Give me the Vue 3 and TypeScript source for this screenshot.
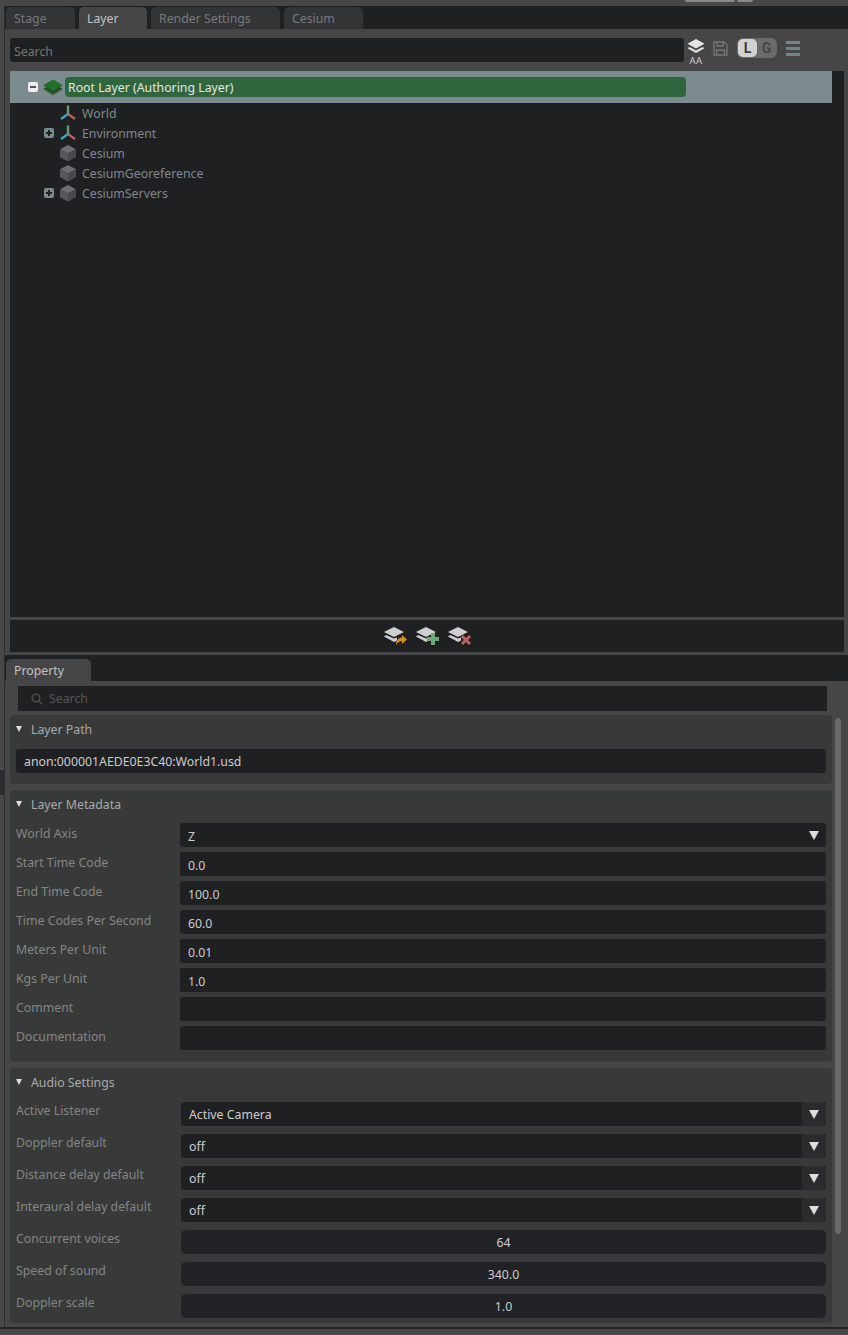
<script setup lang="ts">
interface TreeItem {
  name: string
  icon: 'axes' | 'cube'
  expandable: boolean
}

interface Field {
  label: string
  value: string
  kind: 'text' | 'select' | 'number'
}

const tabs = ['Stage', 'Layer', 'Render Settings', 'Cesium']

const treeItems: TreeItem[] = [
  { name: 'World', icon: 'axes', expandable: false },
  { name: 'Environment', icon: 'axes', expandable: true },
  { name: 'Cesium', icon: 'cube', expandable: false },
  { name: 'CesiumGeoreference', icon: 'cube', expandable: false },
  { name: 'CesiumServers', icon: 'cube', expandable: true },
]

const metadata: Field[] = [
  { label: 'World Axis', value: 'Z', kind: 'select' },
  { label: 'Start Time Code', value: '0.0', kind: 'text' },
  { label: 'End Time Code', value: '100.0', kind: 'text' },
  { label: 'Time Codes Per Second', value: '60.0', kind: 'text' },
  { label: 'Meters Per Unit', value: '0.01', kind: 'text' },
  { label: 'Kgs Per Unit', value: '1.0', kind: 'text' },
  { label: 'Comment', value: '', kind: 'text' },
  { label: 'Documentation', value: '', kind: 'text' },
]

const audio: Field[] = [
  { label: 'Active Listener', value: 'Active Camera', kind: 'select' },
  { label: 'Doppler default', value: 'off', kind: 'select' },
  { label: 'Distance delay default', value: 'off', kind: 'select' },
  { label: 'Interaural delay default', value: 'off', kind: 'select' },
  { label: 'Concurrent voices', value: '64', kind: 'number' },
  { label: 'Speed of sound', value: '340.0', kind: 'number' },
  { label: 'Doppler scale', value: '1.0', kind: 'number' },
]
</script>

<template>
  <div class="desk">
    <div class="top-strip">
      <span class="chip chip-wide"></span>
      <span class="chip chip-small"></span>
    </div>

    <div class="workspace">
      <div class="gutter"><span class="gutter-spot"></span></div>

      <div class="panels">
        <section class="layer-panel">
          <div class="tab-bar">
            <div v-for="tab in tabs" :key="tab" :class="['tab', `tab-${tab.split(' ')[0].toLowerCase()}`, { active: tab === 'Layer' }]">
              {{ tab }}
            </div>
          </div>

          <div class="layer-body">
            <div class="search-row">
              <div class="layer-search">Search</div>
              <div class="layers-aa">
                <svg width="18" height="15" viewBox="0 0 18 15">
                  <path d="M9 0l8.500 4.700L9 9.400.5 4.700z" fill="#e4e4e4" />
                  <path d="M2.600 8L.5 9.300 9 14l8.500-4.700L15.400 8 9 11.500z" fill="#e4e4e4" />
                </svg>
                <span class="aa">AA</span>
              </div>
              <svg class="save-icon" width="15" height="15" viewBox="0 0 15 15" fill="none" stroke="#777" stroke-width="1.300">
                <path d="M1 1h10l3 3v10H1z" />
                <path d="M4 1v4h6V1M3.500 14V9h8v5" />
              </svg>
              <div class="lg-toggle">
                <span class="lg-on">L</span>
                <span class="lg-off">G</span>
              </div>
              <div class="burger"><i></i><i></i><i></i></div>
            </div>

            <div class="tree">
              <div class="root-row">
                <span class="expander expander-root"><i class="h"></i></span>
                <svg class="root-icon" width="20" height="17" viewBox="0 0 20 17">
                  <path d="M0 10.500L10 16.500l10-6L16.500 8h-13z" fill="#4f6a55" />
                  <path d="M1 9.500L10 15l9-5.500L16 7.500H4z" fill="#1f4d22" />
                  <path d="M10 .5l10 5.700-10 5.800L0 6.200z" fill="#1f6f26" />
                </svg>
                <span class="root-pill">Root Layer (Authoring Layer)</span>
              </div>

              <div v-for="item in treeItems" :key="item.name" class="tree-row">
                <span :class="['expander', { hidden: !item.expandable }]"><i class="h"></i><i class="v"></i></span>
                <svg v-if="item.icon === 'axes'" width="16" height="16" viewBox="0 0 16 16" fill="none" stroke-width="2.400">
                  <path d="M8 9V0.500" stroke="#5f9f70" />
                  <path d="M8 9l-7 5" stroke="#38a6c4" />
                  <path d="M8 9l7 5" stroke="#b3605f" />
                </svg>
                <svg v-else width="16" height="18" viewBox="0 0 16 18">
                  <path d="M8 1l8 4.200L8 9.400 0 5.200z" fill="#6b6e72" />
                  <path d="M0 5.200l8 4.200V17.500L0 13.300z" fill="#55585c" />
                  <path d="M16 5.200L8 9.400V17.500l8-4.200z" fill="#47494d" />
                </svg>
                <span class="tree-name">{{ item.name }}</span>
              </div>
            </div>

            <div class="action-bar">
              <svg width="23" height="19" viewBox="0 0 23 19">
                <path d="M10 0l10 5-10 5L0 5z" fill="#cfcfcf" />
                <path d="M2 8L0 9.500 10 15l3-1.500v-3l-3 1z" fill="#cfcfcf" />
                <path d="M12 18c0-5 3-7.500 6-7.500V8l5 4.500-5 4.500v-3c-2 0-4 1-6 4z" fill="#e08a1e" />
              </svg>
              <svg width="23" height="19" viewBox="0 0 23 19">
                <path d="M10 0l10 5-10 5L0 5z" fill="#cfcfcf" />
                <path d="M2 8L0 9.500 10 15l3-1.500v-3l-3 1z" fill="#cfcfcf" />
                <path d="M15 6h4v4h4v4h-4v4h-4v-4h-4v-4h4z" fill="#6ea877" />
              </svg>
              <svg width="23" height="19" viewBox="0 0 23 19">
                <path d="M10 0l10 5-10 5L0 5z" fill="#cfcfcf" />
                <path d="M2 8L0 9.500 10 15l3-1.500v-3l-3 1z" fill="#cfcfcf" />
                <path d="M14 9l8 8M22 9l-8 8" stroke="#c45f62" stroke-width="3" fill="none" />
              </svg>
            </div>
          </div>
        </section>

        <section class="property-panel">
          <div class="tab-bar property-tabs">
            <div class="tab tab-property active">Property</div>
          </div>

          <div class="property-search">
            <svg width="12" height="12" viewBox="0 0 12 12" fill="none" stroke="#4c4e50" stroke-width="1.500">
              <circle cx="5" cy="5" r="3.800" />
              <path d="M8 8l3.300 3.300" />
            </svg>
            <span>Search</span>
          </div>

          <div class="property-scroll">
            <div class="frames">
              <div class="frame frame-path">
                <div class="frame-title"><i class="caret"></i>Layer Path</div>
                <div class="input path-input">anon:000001AEDE0E3C40:World1.usd</div>
              </div>

              <div class="frame frame-meta">
                <div class="frame-title"><i class="caret"></i>Layer Metadata</div>
                <div class="field-list">
                  <div v-for="field in metadata" :key="field.label" class="field">
                    <span class="field-label">{{ field.label }}</span>
                    <div class="input">
                      {{ field.value }}
                      <i v-if="field.kind === 'select'" class="select-arrow"></i>
                    </div>
                  </div>
                </div>
              </div>

              <div class="frame frame-audio">
                <div class="frame-title"><i class="caret"></i>Audio Settings</div>
                <div class="field-list">
                  <div v-for="field in audio" :key="field.label" class="field">
                    <span class="field-label">{{ field.label }}</span>
                    <div :class="['input', { 'input-number': field.kind === 'number' }]">
                      {{ field.value }}
                      <span v-if="field.kind === 'select'" class="select-zone"><i class="select-arrow"></i></span>
                    </div>
                  </div>
                </div>
              </div>
            </div>

            <div class="scroll-track"><div class="scroll-thumb"></div></div>
          </div>
        </section>
      </div>
    </div>

    <div class="bottom-line"></div>
    <div class="bottom-strip"></div>
  </div>
</template>

<style>
html,
body {
  margin: 0;
  background: #474747;
}
</style>

<style scoped>
.desk {
  width: 848px;
  height: 1335px;
  display: flex;
  flex-direction: column;
  overflow: hidden;
  background: #464646;
  font-family: "Noto Sans", "Open Sans", sans-serif;
  font-size: 12.3px;
}
.top-strip {
  height: 6px;
  flex: none;
  display: flex;
  gap: 2px;
  padding-left: 685px;
  box-sizing: border-box;
  background: #474747;
}
.chip {
  height: 2px;
  background: #8a8a8a;
  border-radius: 0 0 2px 2px;
}
.chip-wide {
  width: 50px;
}
.chip-small {
  width: 16px;
}
.workspace {
  flex: 1;
  min-height: 0;
  display: flex;
}
.gutter {
  width: 4px;
  flex: none;
  background: #484848;
}
.gutter-spot {
  display: block;
  height: 25px;
  margin-top: 764px;
  background: #2b2c2e;
}
.panels {
  width: 844px;
  border-left: 1px solid #2e2e2e;
  box-sizing: border-box;
  display: flex;
  flex-direction: column;
}
.tab-bar {
  display: flex;
  gap: 4px;
  height: 23px;
  padding: 1px 0 0 1px;
  box-sizing: border-box;
  background: #1f2022;
}
.tab {
  height: 22px;
  box-sizing: border-box;
  padding: 2px 0 0 8px;
  line-height: 20px;
  border-radius: 5px 5px 0 0;
  background: #333435;
  color: #737b80;
}
.tab.active {
  background: #454545;
  color: #c2c2c2;
}
.tab-stage {
  width: 69px;
}
.tab-layer {
  width: 68px;
}
.tab-render {
  width: 129px;
}
.tab-cesium {
  width: 79px;
}
.layer-body {
  height: 626px;
  padding: 9px 0 0 5px;
  box-sizing: border-box;
  background: #464646;
}
.search-row {
  display: flex;
  height: 24px;
}
.layer-search {
  width: 674px;
  height: 24px;
  padding-left: 4px;
  box-sizing: border-box;
  line-height: 27px;
  border-radius: 3px;
  background: #1f2022;
  color: #767676;
}
.layers-aa {
  width: 18px;
  margin-left: 3px;
  display: flex;
  flex-direction: column;
  align-items: center;
  padding-top: 1px;
}
.layers-aa svg {
  flex: none;
}
.aa {
  flex: none;
  margin-top: 1px;
  font-size: 9.500px;
  line-height: 12px;
  letter-spacing: 0.5px;
  color: #cfcfcf;
}
.save-icon {
  margin: 3px 0 0 8px;
}
.lg-toggle {
  width: 40px;
  height: 20px;
  margin-left: 9px;
  display: flex;
  padding: 1px;
  box-sizing: border-box;
  border-radius: 6px;
  background: #6b6b6b;
  font-family: "Roboto", "DejaVu Sans", sans-serif;
  font-weight: 700;
  font-size: 14px;
  line-height: 18px;
  text-align: center;
}
.lg-on {
  width: 19px;
  border-radius: 5px;
  background: #d2d2d2;
  color: #3b3d40;
}
.lg-off {
  flex: 1;
  color: #444648;
}
.burger {
  margin: 3px 0 0 9px;
  width: 14px;
  display: flex;
  flex-direction: column;
  gap: 3px;
}
.burger i {
  height: 3px;
  background: #728485;
}
.tree {
  width: 834px;
  height: 546px;
  margin-top: 9px;
  background: #1f2022;
}
.root-row {
  width: 822px;
  height: 32px;
  padding-left: 18px;
  box-sizing: border-box;
  display: flex;
  align-items: center;
  background: #7b8b8f;
}
.root-icon {
  margin-left: 5px;
}
.root-pill {
  width: 621px;
  height: 20px;
  margin-left: 2px;
  padding-left: 3px;
  box-sizing: border-box;
  line-height: 21px;
  border-radius: 4px;
  background: #2f663e;
  color: #e6e6e6;
}
.expander {
  position: relative;
  width: 10px;
  height: 10px;
  flex: none;
  border-radius: 2px;
  background: #7b8c8f;
}
.expander-root {
  background: #eeeeee;
}
.expander.hidden {
  visibility: hidden;
}
.expander i {
  position: absolute;
  background: #1f2022;
}
.expander-root i {
  background: #4a5557;
}
.expander .h {
  left: 2px;
  right: 2px;
  top: 4px;
  height: 2px;
}
.expander .v {
  top: 2px;
  bottom: 2px;
  left: 4px;
  width: 2px;
}
.tree-row {
  height: 20px;
  padding-left: 34px;
  display: flex;
  align-items: center;
}
.tree-row svg {
  margin-left: 6px;
  flex: none;
}
.tree-name {
  margin-left: 6px;
  color: #7f888c;
}
.action-bar {
  width: 834px;
  height: 32px;
  margin-top: 3px;
  display: flex;
  justify-content: center;
  align-items: center;
  gap: 9px;
  background: #1f2022;
}
.property-panel {
  flex: 1;
  min-height: 0;
  display: flex;
  flex-direction: column;
  background: #464646;
}
.property-tabs {
  height: 26px;
  padding-top: 4px;
}
.tab-property {
  width: 85px;
}
.property-search {
  width: 809px;
  height: 25px;
  margin: 5px 0 0 13px;
  padding-left: 13px;
  box-sizing: border-box;
  flex: none;
  display: flex;
  align-items: center;
  gap: 6px;
  background: #1f2022;
  color: #555759;
}
.property-scroll {
  flex: 1;
  min-height: 0;
  margin-top: 4px;
  padding-left: 5px;
  display: flex;
}
.frames {
  width: 822px;
  display: flex;
  flex-direction: column;
  gap: 6px;
}
.frame {
  padding: 0 6px;
  box-sizing: border-box;
  border-radius: 4px;
  background: #383a39;
}
.frame-path {
  height: 69px;
}
.frame-meta {
  height: 272px;
}
.frame-audio {
  height: 255px;
}
.frame-title {
  height: 29px;
  padding-bottom: 1px;
  box-sizing: border-box;
  display: flex;
  align-items: center;
  color: #a9a9a9;
}
.caret {
  width: 0;
  height: 0;
  margin-right: 9px;
  border-left: 3.500px solid transparent;
  border-right: 3.500px solid transparent;
  border-top: 6px solid #dcdcdc;
}
.input {
  position: relative;
  flex: 1;
  height: 24px;
  padding-left: 8px;
  box-sizing: border-box;
  line-height: 25px;
  border-radius: 3px;
  background: #1f2022;
  color: #cdcdcd;
}
.frame-meta .input {
  line-height: 27px;
}
.path-input {
  margin-top: 5px;
}
.field-list {
  display: flex;
  flex-direction: column;
}
.frame-meta .field-list {
  gap: 5px;
  margin-top: 4px;
}
.frame-audio .field-list {
  gap: 8px;
  margin-top: 5px;
}
.field {
  display: flex;
  height: 24px;
}
.field-label {
  width: 164px;
  flex: none;
  line-height: 22px;
  color: #858585;
}
.frame-audio .field-label {
  width: 165px;
  line-height: 18px;
}
.input-number {
  padding-left: 0;
  text-align: center;
  border-radius: 5px;
  background: #212226;
}
.select-arrow {
  position: absolute;
  right: 7px;
  top: 8px;
  width: 0;
  height: 0;
  border-left: 5.500px solid transparent;
  border-right: 5.500px solid transparent;
  border-top: 9px solid #dcdcdc;
}
.select-zone {
  position: absolute;
  top: 0;
  right: 0;
  bottom: 0;
  width: 24px;
  border-radius: 0 3px 3px 0;
  background: #2a2b2c;
}
.scroll-track {
  width: 6px;
  margin-left: 3px;
  padding-top: 3px;
}
.scroll-thumb {
  height: 516px;
  border-radius: 3px;
  background: #696969;
}
.bottom-line {
  height: 2px;
  flex: none;
  background: #242424;
}
.bottom-strip {
  height: 6px;
  flex: none;
  background: #474747;
}
</style>
